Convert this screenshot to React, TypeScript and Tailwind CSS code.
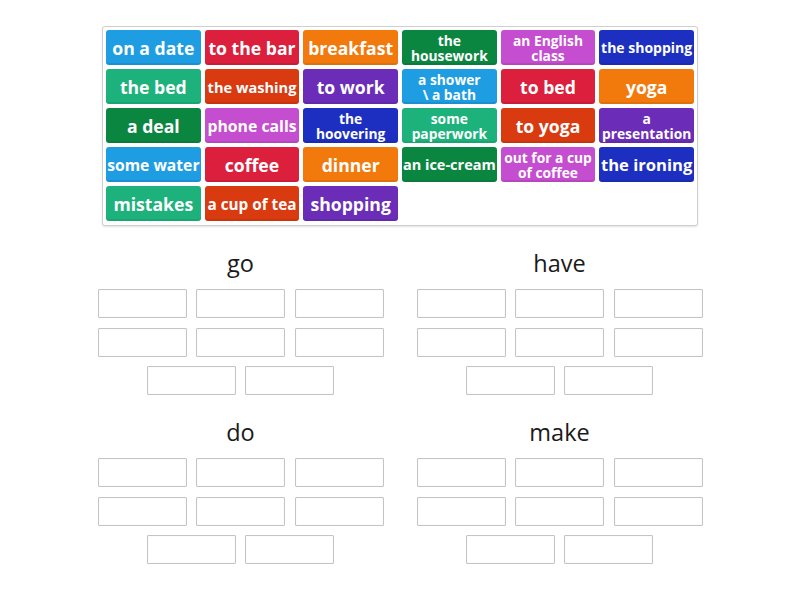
import React from "react";

type Tile = { t: string; c: string; f: string };

const C = {
  lb: "bg-[#1e9de2]",
  rd: "bg-[#db1f3d]",
  or: "bg-[#f27a0d]",
  dg: "bg-[#0b8641]",
  mg: "bg-[#c54dcf]",
  db: "bg-[#1d2fc1]",
  tl: "bg-[#1db27b]",
  ro: "bg-[#d93a0f]",
  pu: "bg-[#6b2db8]",
};

const one = "text-[17.6px] leading-[20px]";
const two = "text-[13.8px] leading-[15px]";

const tiles: Tile[] = [
  { t: "on a date", c: C.lb, f: one },
  { t: "to the bar", c: C.rd, f: one },
  { t: "breakfast", c: C.or, f: one },
  { t: "the\nhousework", c: C.dg, f: two },
  { t: "an English\nclass", c: C.mg, f: two },
  { t: "the shopping", c: C.db, f: "text-[14px] leading-[18px]" },
  { t: "the bed", c: C.tl, f: one },
  { t: "the washing", c: C.ro, f: "text-[14.6px] leading-[18px]" },
  { t: "to work", c: C.pu, f: one },
  { t: "a shower\n\\ a bath", c: C.lb, f: two },
  { t: "to bed", c: C.rd, f: one },
  { t: "yoga", c: C.or, f: one },
  { t: "a deal", c: C.dg, f: one },
  { t: "phone calls", c: C.mg, f: "text-[15.8px] leading-[18px]" },
  { t: "the\nhoovering", c: C.db, f: two },
  { t: "some\npaperwork", c: C.tl, f: two },
  { t: "to yoga", c: C.ro, f: one },
  { t: "a\npresentation", c: C.pu, f: two },
  { t: "some water", c: C.lb, f: "text-[15.7px] leading-[18px]" },
  { t: "coffee", c: C.rd, f: one },
  { t: "dinner", c: C.or, f: one },
  { t: "an ice-cream", c: C.dg, f: "text-[14.5px] leading-[18px]" },
  { t: "out for a cup\nof coffee", c: C.mg, f: two },
  { t: "the ironing", c: C.db, f: "text-[16.6px] leading-[20px]" },
  { t: "mistakes", c: C.tl, f: one },
  { t: "a cup of tea", c: C.ro, f: "text-[15.3px] leading-[18px]" },
  { t: "shopping", c: C.pu, f: one },
];

function Box() {
  return (
    <div className="w-[89px] h-[29px] bg-white border border-[#c4c4c4] rounded-[1px] shadow-[inset_0_0_2px_rgba(0,0,0,0.06)]" />
  );
}

function Group({ title }: { title: string }) {
  return (
    <div className="w-[286px] flex flex-col items-center">
      <div className="h-[30px] leading-[30px] text-[23.5px] text-[#1a1a1a] mb-[11px]">
        {title}
      </div>
      <div className="flex flex-col gap-[9.5px]">
        <div className="flex gap-[9.5px]">
          <Box />
          <Box />
          <Box />
        </div>
        <div className="flex gap-[9.5px]">
          <Box />
          <Box />
          <Box />
        </div>
        <div className="flex gap-[9.5px] justify-center">
          <Box />
          <Box />
        </div>
      </div>
    </div>
  );
}

export default function App() {
  return (
    <div
      className="w-[800px] h-[600px] bg-white overflow-hidden"
      style={{ fontFamily: '"Open Sans", "Noto Sans", sans-serif' }}
    >
      <div className="pt-[26px] flex justify-center">
        <div className="w-[596px] border border-[#cfcfcf] rounded-[3px] shadow-[0_1px_2px_rgba(0,0,0,0.12)] pt-[3px] pb-[4px] px-[3px] bg-white">
          <div className="grid grid-cols-6 gap-[4px]">
            {tiles.map((tile, i) => (
              <div
                key={i}
                className={`${tile.c} h-[35px] rounded-[3px] flex items-center justify-center text-white font-bold text-center whitespace-pre overflow-hidden shadow-[inset_0_-2px_0_rgba(0,0,0,0.08)] ${tile.f}`}
              >
                {tile.t}
              </div>
            ))}
          </div>
        </div>
      </div>
      <div className="mt-[22px] flex justify-center gap-[33px]">
        <Group title="go" />
        <Group title="have" />
      </div>
      <div className="mt-[22px] flex justify-center gap-[33px]">
        <Group title="do" />
        <Group title="make" />
      </div>
    </div>
  );
}
